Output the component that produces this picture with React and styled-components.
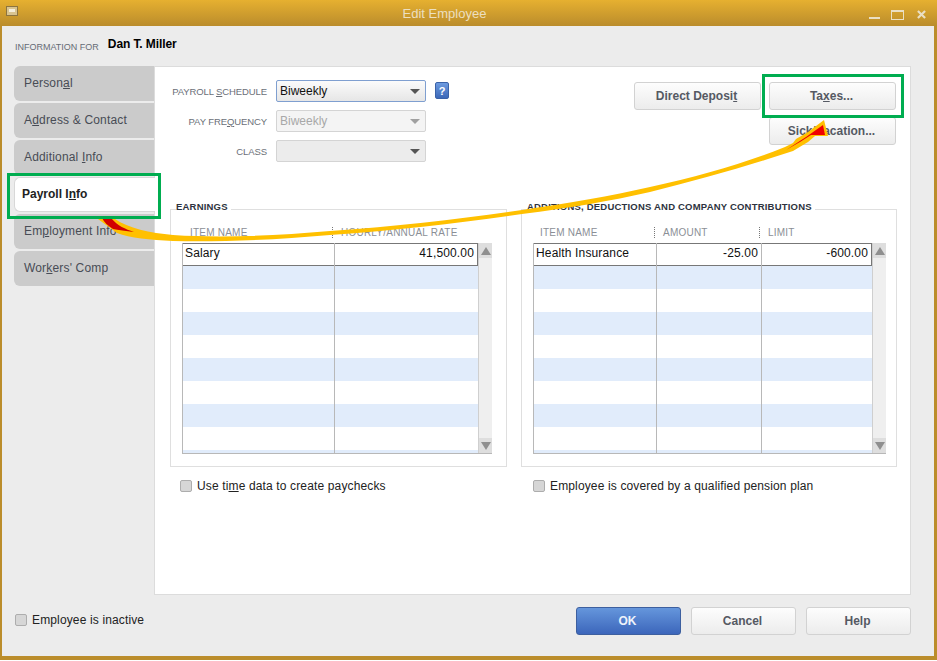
import React from 'react';
import styled, { createGlobalStyle } from 'styled-components';

const GlobalStyle = createGlobalStyle`
    html, body {
        margin: 0;
        padding: 0;
        background: #fff;
        overflow: hidden;
    }
    * {
        box-sizing: border-box;
    }
    body {
        font-family: "Liberation Sans", Arial, sans-serif;
        font-size: 12px;
    }
`;

const Window = styled.div`
    position: relative;
    width: 937px;
    height: 660px;
    display: flex;
    flex-direction: column;
    background: #ececec;
    border-left: 2px solid #bb8d2b;
    border-right: 3px solid #bb8d2b;
    border-bottom: 4px solid #bb8d2b;
`;

const TitleBar = styled.div`
    height: 26px;
    margin: 0 -3px 0 -2px;
    flex: none;
    position: relative;
    display: flex;
    align-items: center;
    justify-content: center;
    padding-right: 48px;
    background: linear-gradient(#e6b030, #ba8c2c);
    color: #ecdfc0;
    font-size: 13px;
`;

const MenuIcon = styled.div`
    position: absolute;
    left: 6px;
    top: 6px;
    width: 12px;
    height: 10px;
    border: 1px solid #8c7440;
    background: #d9c490;
    &::after {
        content: '';
        position: absolute;
        left: 2px;
        top: 2px;
        width: 6px;
        height: 3px;
        background: #f5efdc;
    }
`;

const WindowControls = styled.div`
    position: absolute;
    right: 11px;
    top: 3px;
    height: 20px;
    display: flex;
    align-items: center;
    gap: 11px;
`;

const MinIcon = styled.div`
    width: 11px;
    height: 2px;
    margin-top: 10px;
    background: #eadfc4;
`;

const MaxIcon = styled.div`
    width: 13px;
    height: 10px;
    margin-top: 3px;
    margin-right: 2px;
    border: 1px solid #eadfc4;
    border-top-width: 2px;
`;

const CloseIcon = styled.svg`
    width: 9px;
    height: 9px;
    margin-top: 2px;
`;

const Content = styled.div`
    flex: 1;
    display: flex;
    flex-direction: column;
    min-height: 0;
`;

const InfoRow = styled.div`
    height: 40px;
    flex: none;
    display: flex;
    align-items: center;
    padding: 0 0 4px 13px;
`;

const InfoLabel = styled.span`
    font-size: 9px;
    color: #666b75;
    margin-top: 5px;
    margin-right: 9px;
`;

const InfoName = styled.span`
    font-size: 12px;
    font-weight: bold;
    letter-spacing: -0.1px;
    color: #000;
`;

const Main = styled.div`
    height: 529px;
    flex: none;
    display: flex;
    padding-left: 12px;
    padding-right: 23px;
`;

const Tabs = styled.div`
    width: 140px;
    flex: none;
    display: flex;
    flex-direction: column;
    gap: 2px;
`;

const Tab = styled.div`
    height: 35px;
    flex: none;
    display: flex;
    align-items: center;
    padding-left: ${p => (p.$active ? 7 : 10)}px;
    padding-bottom: 2px;
    border-radius: 6px 0 0 6px;
    letter-spacing: ${p => (p.$active ? 0 : 0.17)}px;
    white-space: pre;
    color: ${p => (p.$active ? '#222' : '#484c55')};
    font-weight: ${p => (p.$active ? 'bold' : 'normal')};
    background: ${p => (p.$active ? '#fff' : '#cbcbcb')};
    border: ${p => (p.$active ? '1px solid #d8d8d8' : 'none')};
    border-right: none;
    position: relative;
    margin-right: ${p => (p.$active ? -1 : 0)}px;
    z-index: 1;
`;

const Panel = styled.div`
    flex: 1;
    background: #fff;
    border: 1px solid #dcdcdc;
    display: flex;
    flex-direction: column;
    padding: 13px 0 0 15px;
`;

const TopArea = styled.div`
    height: 129px;
    flex: none;
    display: flex;
    justify-content: space-between;
    padding-right: 14px;
`;

const Form = styled.div`
    display: grid;
    grid-template-columns: 97px 150px 24px;
    grid-auto-rows: 22px;
    column-gap: 9px;
    row-gap: 8px;
    align-content: start;
    align-items: center;
`;

const FieldLabel = styled.label`
    font-size: 9.5px;
    letter-spacing: -0.1px;
    color: #6b6f78;
    text-align: right;
    white-space: nowrap;
    justify-self: end;
`;

const Select = styled.div`
    height: 22px;
    display: flex;
    align-items: center;
    justify-content: space-between;
    padding: 0 5px 0 3px;
    border-radius: 2px;
    border: 1px solid ${p => (p.$focus ? '#7f9fd0' : '#d4d4d4')};
    background: ${p => (p.$empty ? '#ececec' : p.$disabled ? '#f4f4f4' : 'linear-gradient(#fbfbfb, #e6e6e6)')};
    color: ${p => (p.$disabled ? '#a8a8a8' : '#111')};
`;

const Caret = styled.span`
    width: 0;
    height: 0;
    border-left: 5px solid transparent;
    border-right: 5px solid transparent;
    border-top: 5px solid ${p => (p.$muted ? '#a0a0a0' : '#555')};
`;

const HelpButton = styled.div`
    width: 14px;
    height: 17px;
    margin-top: -1px;
    border-radius: 2px;
    border: 1px solid #3a62a8;
    background: linear-gradient(#6d9be0, #3c68b8);
    color: #fff;
    font-size: 11px;
    font-weight: bold;
    display: flex;
    align-items: center;
    justify-content: center;
`;

const ActionButtons = styled.div`
    display: grid;
    grid-template-columns: 127px 127px;
    grid-auto-rows: 28px;
    column-gap: 8px;
    row-gap: 7px;
    padding-top: 2px;
    align-content: start;
`;

const Button = styled.button`
    width: ${p => p.$width || 'auto'};
    height: 28px;
    padding: 0 2px 0 0;
    font-family: inherit;
    font-size: 12px;
    font-weight: bold;
    color: ${p => (p.$primary ? '#eef3fb' : '#555963')};
    border-radius: 3px;
    border: 1px solid ${p => (p.$primary ? '#3d5f9f' : '#d2d2d2')};
    background: ${p => (p.$primary ? 'linear-gradient(#6596dc, #3c66bb)' : 'linear-gradient(#fdfdfd, #ececec)')};
`;

const Tables = styled.div`
    display: flex;
    gap: 14px;
    height: 258px;
    flex: none;
`;

const Group = styled.fieldset`
    width: ${p => p.$width}px;
    height: 258px;
    margin: 0;
    padding: 0;
    position: relative;
    border: 1px solid #dfdfdf;
    display: flex;
    flex-direction: column;
    align-items: flex-start;
`;

const Legend = styled.div`
    position: absolute;
    left: 5px;
    top: -9px;
    padding-right: 3px;
    background: #fff;
    font-size: 9.5px;
    font-weight: bold;
    letter-spacing: 0.2px;
    color: #2d3340;
    white-space: nowrap;
`;

const HeaderRow = styled.div`
    height: 33px;
    padding-top: 17px;
    margin-left: 11px;
    display: grid;
    grid-template-columns: ${p => p.$cols};
    flex: none;
    font-size: 10px;
    letter-spacing: 0.22px;
    color: #8b8f96;
`;

const HeaderCell = styled.div`
    padding-left: ${p => p.$pad || 7}px;
    white-space: nowrap;
    position: relative;
    &::before {
        content: ${p => (p.$grip ? '""' : 'none')};
        position: absolute;
        left: -2px;
        top: 0;
        height: 11px;
        border-left: 1px dotted #777;
    }
`;

const TableWrap = styled.div`
    margin-left: 11px;
    height: 211px;
    width: ${p => p.$width}px;
    display: flex;
    border: 1px solid #b8b8b8;
    border-top: none;
    border-right: none;
    overflow: hidden;
`;

const Rows = styled.div`
    flex: 1;
    overflow: hidden;
`;

const Row = styled.div`
    height: 23px;
    display: grid;
    grid-template-columns: ${p => p.$cols};
    background: ${p => (p.$stripe ? '#e1ecfb' : '#fff')};
    box-shadow: ${p => (p.$selected ? 'inset 0 1px 0 #777, inset 0 -1px 0 #777, inset -1px 0 0 #777' : 'none')};
`;

const Cell = styled.div`
    border-right: 1px solid ${p => (p.$last ? 'transparent' : '#b8b8b8')};
    text-align: ${p => (p.$right ? 'right' : 'left')};
    padding: 0 3px 0 2px;
    line-height: 21px;
    letter-spacing: 0.15px;
    color: #111;
    white-space: nowrap;
`;

const ScrollBar = styled.div`
    width: 14px;
    flex: none;
    background: #efefef;
    border-left: 1px solid #cfcfcf;
    display: flex;
    flex-direction: column;
    justify-content: space-between;
`;

const ScrollButton = styled.div`
    height: 15px;
    background: #dedede;
    display: flex;
    align-items: center;
    justify-content: center;
    &::after {
        content: '';
        border-left: 5px solid transparent;
        border-right: 5px solid transparent;
        ${p => (p.$down ? 'border-top' : 'border-bottom')}: 8px solid #8f8f8f;
    }
`;

const CheckRow = styled.div`
    display: flex;
    gap: 14px;
    margin-top: 12px;
`;

const CheckItem = styled.label`
    width: ${p => (p.$width ? `${p.$width}px` : 'auto')};
    display: flex;
    align-items: center;
    gap: 5px;
    padding-left: ${p => p.$pad || 0}px;
    letter-spacing: 0.14px;
    color: #222;
    height: 14px;
`;

const Box = styled.span`
    width: 12px;
    height: 12px;
    flex: none;
    border-radius: 2px;
    background: #d6d6d6;
    border: 1px solid #adadad;
`;

const Footer = styled.div`
    flex: 1;
    display: flex;
    align-items: flex-start;
    justify-content: space-between;
    padding: 12px 23px 0 13px;
`;

const FooterCheck = styled(CheckItem)`
    margin-top: 6px;
`;

const FooterButtons = styled.div`
    display: flex;
    gap: 10px;
`;

const Highlight = styled.div`
    position: absolute;
    left: ${p => p.$x - 2}px;
    top: ${p => p.$y}px;
    width: ${p => p.$w}px;
    height: ${p => p.$h}px;
    border: 3px solid #00ad50;
    z-index: 5;
    pointer-events: none;
`;

const ArrowLayer = styled.svg`
    position: absolute;
    left: -2px;
    top: 0;
    width: 937px;
    height: 660px;
    z-index: 4;
    pointer-events: none;
`;

const Key = styled.u`
    text-decoration: underline;
`;

const ROWS = Array.from({ length: 10 });
const LEFT_COLS = '152px 143px';
const RIGHT_COLS = '123px 105px 110px';

const DataTable = ({ width, cols, first }) => (
    <TableWrap $width={width}>
        <Rows>
            {ROWS.map((_, i) => (
                <Row key={i} $cols={cols} $stripe={i % 2 === 1} $selected={i === 0}>
                    {first.map((cell, c) => (
                        <Cell key={c} $right={c > 0} $last={c === first.length - 1}>
                            {i === 0 ? cell : ''}
                        </Cell>
                    ))}
                </Row>
            ))}
        </Rows>
        <ScrollBar>
            <ScrollButton />
            <ScrollButton $down />
        </ScrollBar>
    </TableWrap>
);

const Arrow = () => (
    <ArrowLayer viewBox="0 0 937 660">
        <path
            d="M98 219 L115 219 C128 228 150 233 173 235 C220 238 275 236 330 231 C400 226 460 219 522 210 C570 203 610 196 650 187 C700 176 745 163 785 147 L793 143 L796 139 L808 132 L824 120 L828 136 L815 136 L808 142 L793 151 L768 159 C730 171 690 182 650 192 C610 201 570 208 522 214 C460 223 400 230 330 235 C275 240 220 242 173 241 C150 240 130 238 117 233 Z"
            fill="#ffc000"
        />
        <path d="M786 150 L806 137 L823 125 L825 135 L811 135 L800 142 Z" fill="#f00000" />
        <path d="M102 218 L111 218 C118 226 125 229 134 232 C126 231 118 230 113 229 C108 226 104 222 102 218 Z" fill="#d10000" />
    </ArrowLayer>
);

const App = () => {
    return (
        <>
            <GlobalStyle />
            <Window>
                <TitleBar>
                    <MenuIcon />
                    Edit Employee
                    <WindowControls>
                        <MinIcon />
                        <MaxIcon />
                        <CloseIcon viewBox="0 0 10 10">
                            <path d="M1 1 L9 9 M9 1 L1 9" stroke="#eadfc4" strokeWidth="2.4" />
                        </CloseIcon>
                    </WindowControls>
                </TitleBar>
                <Content>
                    <InfoRow>
                        <InfoLabel>INFORMATION FOR</InfoLabel>
                        <InfoName>Dan T. Miller</InfoName>
                    </InfoRow>
                    <Main>
                        <Tabs>
                            <Tab>Person<Key>a</Key>l</Tab>
                            <Tab>A<Key>d</Key>dress &amp; Contact</Tab>
                            <Tab>Additional <Key>I</Key>nfo</Tab>
                            <Tab $active>Payroll I<Key>n</Key>fo</Tab>
                            <Tab>Em<Key>p</Key>loyment Info</Tab>
                            <Tab>Wor<Key>k</Key>ers' Comp</Tab>
                        </Tabs>
                        <Panel>
                            <TopArea>
                                <Form>
                                    <FieldLabel>PAYROLL <Key>S</Key>CHEDULE</FieldLabel>
                                    <Select $focus>Biweekly<Caret /></Select>
                                    <HelpButton>?</HelpButton>
                                    <FieldLabel>PAY FRE<Key>Q</Key>UENCY</FieldLabel>
                                    <Select $disabled>Biweekly<Caret $muted /></Select>
                                    <span />
                                    <FieldLabel>CLASS</FieldLabel>
                                    <Select $empty><span /><Caret /></Select>
                                </Form>
                                <ActionButtons>
                                    <Button>Direct Deposi<Key>t</Key></Button>
                                    <Button>Ta<Key>x</Key>es...</Button>
                                    <span />
                                    <Button>Sick/Vacation...</Button>
                                </ActionButtons>
                            </TopArea>
                            <Tables>
                                <Group $width={337}>
                                    <Legend>EARNINGS</Legend>
                                    <HeaderRow $cols={LEFT_COLS}>
                                        <HeaderCell $pad={8}>ITEM NAME</HeaderCell>
                                        <HeaderCell $grip>HOURLY/ANNUAL RATE</HeaderCell>
                                    </HeaderRow>
                                    <DataTable width={310} cols={LEFT_COLS} first={['Salary', '41,500.00']} />
                                </Group>
                                <Group $width={376}>
                                    <Legend>ADDITIONS, DEDUCTIONS AND COMPANY CONTRIBUTIONS</Legend>
                                    <HeaderRow $cols={RIGHT_COLS}>
                                        <HeaderCell>ITEM NAME</HeaderCell>
                                        <HeaderCell $grip>AMOUNT</HeaderCell>
                                        <HeaderCell $grip>LIMIT</HeaderCell>
                                    </HeaderRow>
                                    <DataTable width={353} cols={RIGHT_COLS} first={['Health Insurance', '-25.00', '-600.00']} />
                                </Group>
                            </Tables>
                            <CheckRow>
                                <CheckItem $width={337} $pad={10}>
                                    <Box />
                                    <span>Use ti<Key>m</Key>e data to create paychecks</span>
                                </CheckItem>
                                <CheckItem $pad={12}>
                                    <Box />
                                    <span>Employee is covered by a qualified pension plan</span>
                                </CheckItem>
                            </CheckRow>
                        </Panel>
                    </Main>
                    <Footer>
                        <FooterCheck>
                            <Box />
                            <span>Employee is inactive</span>
                        </FooterCheck>
                        <FooterButtons>
                            <Button $primary $width="105px">OK</Button>
                            <Button $width="105px">Cancel</Button>
                            <Button $width="105px">Help</Button>
                        </FooterButtons>
                    </Footer>
                </Content>
                <Arrow />
                <Highlight $x={7} $y={173} $w={154} $h={46} />
                <Highlight $x={762} $y={74} $w={142} $h={44} />
            </Window>
        </>
    );
};

export default App;
